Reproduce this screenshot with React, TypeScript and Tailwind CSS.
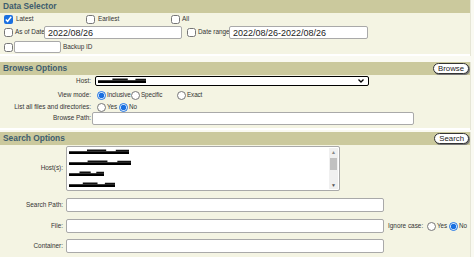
import type { ReactNode } from "react";

const font = "font-['Liberation_Sans',Arial,sans-serif]";
const label = "text-[6.4px] leading-none text-[#333] whitespace-nowrap";
const box = "h-[9px] w-[9px] m-0 shrink-0 accent-[#1a6fe0]";
const field =
  "box-border rounded-[2px] border border-[#a9a9a9] bg-white px-[3px] text-[9px] leading-none text-[#222] outline-none";

function Section({
  title,
  action,
  className = "",
  children,
}: {
  title: string;
  action?: ReactNode;
  className?: string;
  children: ReactNode;
}) {
  return (
    <div className={`w-[471px] border-r border-[#e6e6d6] ${className}`}>
      <div className="flex h-[13px] items-center justify-between bg-[#cbc99d] pl-[3px] pr-[1px]">
        <span className="text-[8.4px] font-bold leading-none text-[#3e5d6e]">{title}</span>
        {action}
      </div>
      <div className="border-b-2 border-white bg-[#f4f4e3]">{children}</div>
    </div>
  );
}

function Pill({ text }: { text: string }) {
  return (
    <button
      type="button"
      className="h-[11px] rounded-full border border-[#333] bg-white px-[4px] text-[7.8px] leading-none text-[#222] shadow-[1px_1px_0_#777]"
    >
      {text}
    </button>
  );
}

function Radio({ name, checked, text }: { name: string; checked?: boolean; text: string }) {
  return (
    <label className="flex items-center gap-[1px]">
      <input type="radio" name={name} defaultChecked={checked} className={box} />
      <span className="whitespace-nowrap text-[6.3px] leading-none tracking-[-0.1px] text-[#333]">{text}</span>
    </label>
  );
}

// redacted host names, drawn as black marker strokes
function Scribble({ w }: { w: number }) {
  return (
    <svg width={w} height="6" viewBox={`0 0 ${w} 6`} className="block">
      <path d={`M0 3.6 L${w} 3.6`} stroke="#000" strokeWidth="2.6" />
      <path d={`M${w * 0.3} 1.4 L${w * 0.62} 1.4 M${w * 0.78} 1.6 L${w} 1.6`} stroke="#111" strokeWidth="1.6" />
    </svg>
  );
}

export default function App() {
  return (
    <div className={`${font} flex h-[257px] w-[474px] flex-col overflow-hidden bg-[#fafaf2]`}>
      <Section title="Data Selector">
        <div className="flex flex-col pb-[1px] pl-[4px] pt-[1px]">
          <div className="flex h-[10px] items-center">
            <label className="flex w-[82px] items-center gap-[3px]">
              <input type="checkbox" defaultChecked className={box} />
              <span className={label}>Latest</span>
            </label>
            <label className="flex w-[85px] items-center gap-[3px]">
              <input type="checkbox" className={box} />
              <span className={label}>Earliest</span>
            </label>
            <label className="flex items-center gap-[2px]">
              <input type="checkbox" className={box} />
              <span className={label}>All</span>
            </label>
          </div>
          <div className="mt-[2px] flex h-[13px] items-center">
            <input type="checkbox" className={box} />
            <span className={`${label} ml-[2px] w-[29px]`}>As of Date</span>
            <input defaultValue="2022/08/26" className={`${field} h-[13px] w-[138px]`} />
            <input type="checkbox" className={`${box} ml-[5px]`} />
            <span className={`${label} ml-[2px] w-[31px]`}>Date range</span>
            <input defaultValue="2022/08/26-2022/08/26" className={`${field} h-[13px] w-[139px]`} />
          </div>
          <div className="mt-[2px] flex h-[12px] items-center">
            <input type="checkbox" className={box} />
            <input className={`${field} ml-[1px] h-[12px] w-[47px]`} />
            <span className={`${label} ml-[2px]`}>Backup ID</span>
          </div>
        </div>
      </Section>

      <Section title="Browse Options" action={<Pill text="Browse" />} className="mt-[6px]">
        <div className="flex flex-col pb-[3px] pt-[1px]">
          <div className="flex h-[10px] items-center">
            <span className={`${label} w-[93px] pr-[2px] text-right`}>Host:</span>
            <div className="ml-[2px] flex h-[10px] w-[274px] items-center justify-between rounded-[2px] border-[1.5px] border-black bg-white pl-[2px] pr-[4px]">
              <Scribble w={48} />
              <svg width="6" height="4" viewBox="0 0 6 4">
                <path d="M0.5 0.5 L3 3 L5.5 0.5" stroke="#000" strokeWidth="1.3" fill="none" />
              </svg>
            </div>
          </div>
          <div className="mt-[3px] flex h-[12px] items-center">
            <span className={`${label} w-[93px] pr-[2px] text-right`}>View mode:</span>
            <div className="ml-[4px] flex items-center">
              <div className="w-[34px]"><Radio name="vm" checked text="Inclusive" /></div>
              <div className="w-[46px]"><Radio name="vm" text="Specific" /></div>
              <Radio name="vm" text="Exact" />
            </div>
          </div>
          <div className="mt-[1px] flex h-[10px] items-center">
            <span className={`${label} w-[93px] pr-[2px] text-right`}>List all files and directories:</span>
            <div className="ml-[4px] flex items-center gap-[2px]">
              <Radio name="la" text="Yes" />
              <Radio name="la" checked text="No" />
            </div>
          </div>
          <div className="flex h-[13px] items-center">
            <span className={`${label} w-[93px] pr-[2px] text-right`}>Browse Path:</span>
            <input className={`${field} ml-[-1px] h-[13px] w-[322px]`} />
          </div>
        </div>
      </Section>

      <Section title="Search Options" action={<Pill text="Search" />} className="mt-[2px]">
        <div className="flex flex-col pb-[6px] pt-[1px]">
          <div className="flex items-center">
            <span className={`${label} w-[64px] pr-[1px] text-right`}>Host(s):</span>
            <div className="ml-[2px] flex h-[45px] w-[274px] rounded-[2px] border border-[#a9a9a9] bg-white">
              <div className="flex flex-1 flex-col gap-[5px] pl-[2px] pt-[2px]">
                <Scribble w={60} />
                <Scribble w={62} />
                <Scribble w={35} />
                <Scribble w={46} />
              </div>
              <div className="my-[1px] mr-[1px] flex w-[9px] flex-col items-center bg-[#f0f0f0]">
                <span className="text-[5px] leading-[8px] text-[#888]">▲</span>
                <div className="mt-[2px] h-[12px] w-[7px] bg-[#c1c1c1]" />
                <div className="flex-1" />
                <span className="text-[5px] leading-[8px] text-[#555]">▼</span>
              </div>
            </div>
          </div>
          <div className="mt-[7px] flex h-[14px] items-center">
            <span className={`${label} w-[64px] pr-[1px] text-right`}>Search Path:</span>
            <input className={`${field} ml-[2px] h-[14px] w-[318px]`} />
          </div>
          <div className="mt-[7px] flex h-[14px] items-center">
            <span className={`${label} w-[64px] pr-[1px] text-right`}>File:</span>
            <input className={`${field} ml-[2px] h-[14px] w-[318px]`} />
            <span className={`${label} ml-[4px] w-[39px]`}>Ignore case:</span>
            <div className="flex items-center gap-[2px]">
              <Radio name="ic" text="Yes" />
              <Radio name="ic" checked text="No" />
            </div>
          </div>
          <div className="mt-[6px] flex h-[14px] items-center">
            <span className={`${label} w-[64px] pr-[1px] text-right`}>Container:</span>
            <input className={`${field} ml-[2px] h-[14px] w-[318px]`} />
          </div>
        </div>
      </Section>
    </div>
  );
}
